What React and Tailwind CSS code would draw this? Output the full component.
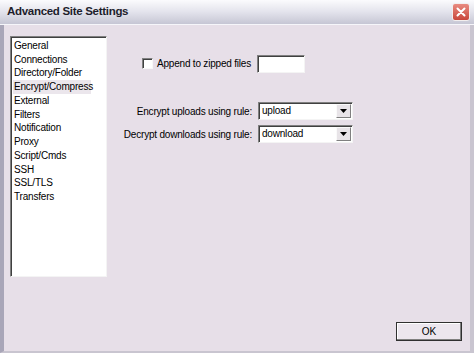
import React from "react";

const items = ["General","Connections","Directory/Folder","Encrypt/Compress","External","Filters","Notification","Proxy","Script/Cmds","SSH","SSL/TLS","Transfers"];

function Select({ value }) {
  return (
    <div className="flex items-center w-[95px] h-[18px] bg-white border border-t-[#808080] border-l-[#808080] border-b-[#f4f4f4] border-r-[#f4f4f4] shadow-[inset_1px_1px_0_#404040]">
      <span className="flex-1 pl-[3px] text-[10px] tracking-[-0.2px] leading-none text-black">{value}</span>
      <div className="w-[15px] h-[14px] mr-[1px] flex items-center justify-center bg-[#e8e4e8] border border-t-[#fafafa] border-l-[#fafafa] border-b-[#808080] border-r-[#808080]">
        <svg width="7" height="4" viewBox="0 0 7 4"><path d="M0 0h7L3.5 4z" fill="#000" /></svg>
      </div>
    </div>
  );
}

export default function App() {
  return (
    <div className="w-[474px] h-[353px] flex flex-col bg-[#e7dfe8] overflow-hidden" style={{ fontFamily: '"Liberation Sans", Arial, sans-serif' }}>
      <div className="h-[25px] flex items-center justify-between pl-[7px] pr-[4px] bg-gradient-to-b from-[#fbfbfd] via-[#e3e3ec] to-[#c6c6d4] border-b border-[#f6f6fa]">
        <span className="text-[11.5px] font-bold text-[#1d1d2b] tracking-[-0.3px]">Advanced Site Settings</span>
        <div className="w-[18px] h-[18px] rounded-[3px] bg-gradient-to-b from-[#e88a80] to-[#c8453a] border border-[#f2eeee] flex items-center justify-center">
          <svg width="10" height="10" viewBox="0 0 10 10"><path d="M1.5 1.5l7 7M8.5 1.5l-7 7" stroke="#fff" strokeWidth="2" strokeLinecap="round" /></svg>
        </div>
      </div>
      <div className="flex-1 flex border-l-[4px] border-l-[#a9a6b8] border-r-[4px] border-r-[#c9c5d0] border-b-[2px] border-b-[#c9c5d0]">
        <div className="pt-[11px] pl-[6px]">
          <div className="w-[97px] h-[241px] bg-white border border-t-[#808080] border-l-[#808080] border-b-[#f4f4f4] border-r-[#f4f4f4] shadow-[inset_1px_1px_0_#404040] pt-[2px] pl-[2px]">
            {items.map((t) => (
              <div key={t} className={`h-[13.75px] flex items-center text-[10px] tracking-[-0.2px] leading-none text-black pl-[1px] whitespace-nowrap ${t === "Encrypt/Compress" ? "bg-[#ebe6ec] w-[78px]" : ""}`}>{t}</div>
            ))}
          </div>
        </div>
        <div className="flex-1 flex flex-col">
          <div className="flex items-center mt-[30px] ml-[35px] h-[17px]">
            <div className="w-[11px] h-[11px] bg-white border border-t-[#808080] border-l-[#808080] border-b-[#f8f8f8] border-r-[#f8f8f8] shadow-[inset_1px_1px_0_#404040]" />
            <span className="ml-[4px] w-[89px] whitespace-nowrap text-[10px] tracking-[-0.2px] text-black">Append to zipped files</span>
            <div className="ml-[11px] w-[48px] h-[18px] bg-white border border-t-[#808080] border-l-[#808080] border-b-[#f4f4f4] border-r-[#f4f4f4] shadow-[inset_1px_1px_0_#404040]" />
          </div>
          <div className="flex items-center mt-[30px] h-[18px]">
            <span className="w-[145px] whitespace-nowrap text-right text-[10px] tracking-[-0.2px] text-black">Encrypt uploads using rule:</span>
            <div className="ml-[6px]"><Select value="upload" /></div>
          </div>
          <div className="flex items-center mt-[5px] h-[18px]">
            <span className="w-[145px] whitespace-nowrap text-right text-[10px] tracking-[-0.2px] text-black">Decrypt downloads using rule:</span>
            <div className="ml-[6px]"><Select value="download" /></div>
          </div>
          <div className="flex-1" />
          <div className="flex justify-end pr-[8px] pb-[10px]">
            <div className="w-[66px] h-[19px] flex items-center justify-center bg-[#ece6ee] border border-[#303030] shadow-[inset_-1px_-1px_0_#808080,inset_1px_1px_0_#ffffff] text-[10px] text-black">OK</div>
          </div>
        </div>
      </div>
    </div>
  );
}
